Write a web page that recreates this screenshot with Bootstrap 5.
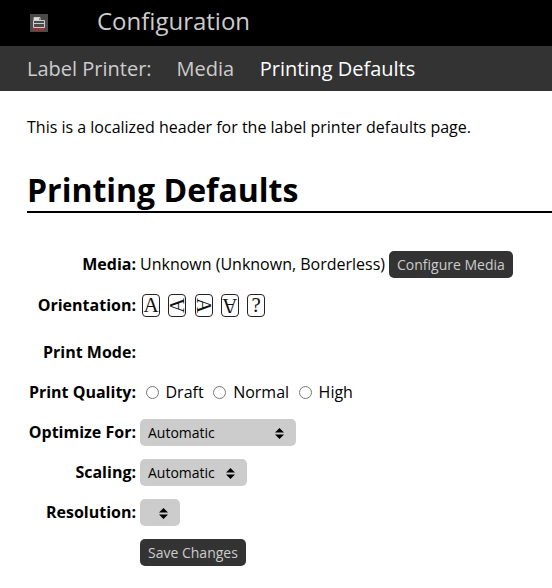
<!DOCTYPE html>
<html lang="en"><head><meta charset="utf-8"><title>Printing Defaults</title>
<link href="https://cdn.jsdelivr.net/npm/bootstrap@5.3.0/dist/css/bootstrap.min.css" rel="stylesheet">
<style>
html,body{height:100%;overflow:hidden}
body{font-family:"Open Sans",sans-serif;font-size:16px;line-height:24px;color:#000;background:#fff}
.top-bar{background:#000;height:46px;padding-left:30px;gap:49px}
.top-title{color:#ccc;font-size:24px;line-height:46px;margin-bottom:4px}
.logo-ico{width:18px;height:18px;display:block}
.sub-bar{background:#333;height:45px;padding-left:27px;gap:25px;font-size:20px;line-height:45px;color:#ccc}
.sub-bar a{color:#ccc;text-decoration:none}
.sub-bar a.cur{color:#fff;margin-left:.5px}
.page-body{padding:0 0 0 27px}
.intro-line{margin:0;padding-top:24px;height:68px;font-size:16px}
.page-head{font-size:32px;font-weight:700;line-height:40px;margin:0;padding-top:11px;height:54px;border-bottom:2px solid #000;color:#000}
.form-wrap{padding-top:37px}
.frow{display:flex;align-items:center;min-height:40px;gap:4px}
.flabel{width:136px;text-align:right;font-weight:700;flex:none}
.h-media{height:28px;min-height:28px}
.h-orient{height:54px}
.face-box{display:inline-flex;align-items:center;justify-content:center;width:18px;height:23px;border:1px solid #222;border-radius:4px;font-family:"Liberation Serif",serif;font-size:21px;line-height:1;color:#111}
.face-set{gap:8.3px;margin-left:2px}
.face-r1{transform:rotate(-90deg);display:inline-block}
.face-r2{transform:rotate(90deg);display:inline-block}
.face-r3{transform:rotate(180deg);display:inline-block}
.dark-btn{background:#333;color:#ccc;border:0;border-radius:5px;font-family:inherit;font-size:14px;line-height:19px;padding:4px 8px;height:27px}
.gray-sel{display:inline-flex;align-items:center;justify-content:space-between;background:#ccc;border-radius:5px;height:27px;padding:2px 8px 0;font-size:14px;color:#000}
.sel-opt{width:156px}.sel-sca{width:107px}.sel-res{width:40px;justify-content:flex-end}
.updown{display:block;width:9px;height:11px;margin-right:4px}
.radio-dot{width:13px;height:13px;border:1px solid #767676;border-radius:50%;background:#fff;display:inline-block;flex:none}
.radio-lab{margin-left:7px;margin-right:9.5px}
.radio-one{margin-left:5.5px}
</style></head>
<body>
<div class="top-bar d-flex align-items-center">
<svg class="logo-ico" viewBox="0 0 18 18"><rect width="18" height="18" fill="#4a4a4a"/><path d="M4 3.500h6v3H4zM3.500 6.500h11v7h-11zM3.500 9.500h11" fill="none" stroke="#ccc"/><rect x="4" y="4" width="5" height="2" fill="#ddd"/><path d="M3 15.500h12" stroke="#e02020" stroke-width="2" stroke-dasharray="2 1"/></svg>
<span class="top-title">Configuration</span>
</div>
<div class="sub-bar d-flex align-items-center"><span>Label Printer:</span><a href="#">Media</a><a class="cur" href="#">Printing Defaults</a></div>
<div class="page-body">
<p class="intro-line">This is a localized header for the label printer defaults page.</p>
<h1 class="page-head">Printing Defaults</h1>
</div>
<div class="form-wrap">
<div class="frow h-media"><span class="flabel">Media:</span><span>Unknown (Unknown, Borderless)</span><button class="dark-btn" type="button">Configure Media</button></div>
<div class="frow h-orient"><span class="flabel">Orientation:</span><span class="d-flex face-set">
<span class="face-box">A</span><span class="face-box"><span class="face-r1">A</span></span><span class="face-box"><span class="face-r2">A</span></span><span class="face-box"><span class="face-r3">A</span></span><span class="face-box">?</span></span></div>
<div class="frow"><span class="flabel">Print Mode:</span></div>
<div class="frow"><span class="flabel">Print Quality:</span><span class="d-flex align-items-center"><span class="radio-dot radio-one"></span><span class="radio-lab">Draft</span><span class="radio-dot"></span><span class="radio-lab">Normal</span><span class="radio-dot"></span><span class="radio-lab">High</span></span></div>
<div class="frow"><span class="flabel">Optimize For:</span><span class="gray-sel sel-opt">Automatic<svg class="updown" viewBox="0 0 9 11"><path d="M4.500 0 9 4.500H0zM0 6.500h9L4.500 11z"/></svg></span></div>
<div class="frow"><span class="flabel">Scaling:</span><span class="gray-sel sel-sca">Automatic<svg class="updown" viewBox="0 0 9 11"><path d="M4.500 0 9 4.500H0zM0 6.500h9L4.500 11z"/></svg></span></div>
<div class="frow"><span class="flabel">Resolution:</span><span class="gray-sel sel-res"><svg class="updown" viewBox="0 0 9 11"><path d="M4.500 0 9 4.500H0zM0 6.500h9L4.500 11z"/></svg></span></div>
<div class="frow"><span class="flabel"></span><button class="dark-btn" type="button">Save Changes</button></div>
</div>
<script src="https://cdn.jsdelivr.net/npm/bootstrap@5.3.0/dist/js/bootstrap.bundle.min.js"></script>
</body></html>
